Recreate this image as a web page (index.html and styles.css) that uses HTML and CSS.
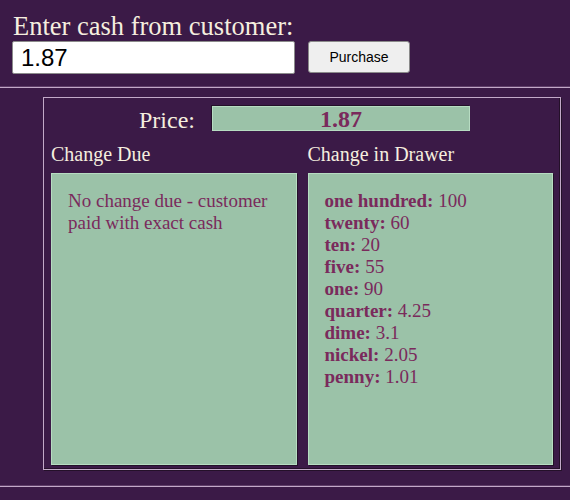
FILE: index.html
```html
<!DOCTYPE html>
<html>
<head>
<meta charset="utf-8">
<link rel="stylesheet" href="styles.css">
</head>
<body>
<div class="top">
  <label class="prompt" for="cash">Enter cash from customer:</label>
  <div class="entry">
    <input id="cash" class="cash" type="text" value="1.87">
    <button class="buy">Purchase</button>
  </div>
</div>
<hr class="rule">
<div class="register">
  <div class="price-row">
    <span class="price-label">Price:</span>
    <div class="price-value">1.87</div>
  </div>
  <div class="cols">
    <div class="col">
      <h2 class="col-title">Change Due</h2>
      <div class="panel">
        <p class="msg">No change due - customer paid with exact cash</p>
      </div>
    </div>
    <div class="col">
      <h2 class="col-title">Change in Drawer</h2>
      <div class="panel">
        <ul class="drawer">
          <li><b>one hundred:</b> 100</li>
          <li><b>twenty:</b> 60</li>
          <li><b>ten:</b> 20</li>
          <li><b>five:</b> 55</li>
          <li><b>one:</b> 90</li>
          <li><b>quarter:</b> 4.25</li>
          <li><b>dime:</b> 3.1</li>
          <li><b>nickel:</b> 2.05</li>
          <li><b>penny:</b> 1.01</li>
        </ul>
      </div>
    </div>
  </div>
</div>
<hr class="rule bottom">
</body>
</html>
```
FILE: styles.css
```css
html, body {
  margin: 0;
  padding: 0;
  background: #3b1a47;
  font-family: "Liberation Serif", "DejaVu Serif", serif;
  color: #f5eedf;
}
.top {
  padding: 12px 0 0 12px;
}
.prompt {
  display: block;
  font-size: 26.5px;
  line-height: 29px;
  margin-left: 1px;
}
.entry {
  display: flex;
  align-items: flex-start;
  gap: 13px;
  margin-top: 0;
}
.cash {
  box-sizing: border-box;
  width: 283px;
  height: 33px;
  margin: 0;
  padding: 0 8px;
  border: 1px solid #8b8b8b;
  border-radius: 2px;
  background: #fff;
  font-family: "Liberation Sans", Arial, sans-serif;
  font-size: 24px;
  color: #000;
}
.buy {
  box-sizing: border-box;
  width: 102px;
  height: 32px;
  margin: 0;
  border: 1px solid #8a8a8a;
  border-radius: 3px;
  background: #efefef;
  font-family: "Liberation Sans", Arial, sans-serif;
  font-size: 14px;
  color: #000;
}
.rule {
  margin: 12px 0 0;
  border: 0;
  border-top: 1px solid #5e3d68;
  border-bottom: 1px solid #c2a9c8;
  height: 0;
}
.rule.bottom {
  margin-top: 15px;
}
.register {
  box-sizing: border-box;
  width: 518px;
  margin: 9px 0 0 43px;
  border: 1px solid #c2a9c8;
  box-shadow: inset -1px -1px 0 #241029, 1px 1px 0 #241029;
  padding: 8px 7px 4px 7px;
}
.price-row {
  display: flex;
  align-items: center;
  height: 24px;
}
.price-label {
  width: 144px;
  text-align: right;
  font-size: 24px;
  line-height: 24px;
  position: relative;
  top: 2px;
}
.price-value {
  box-sizing: border-box;
  margin-left: 17px;
  width: 258px;
  height: 25px;
  background: #9bc2a8;
  border: 1px solid #b7dcc2;
  box-shadow: -1px -1px 0 #241029;
  color: #7a2a5c;
  font-size: 24px;
  font-weight: bold;
  line-height: 24px;
  text-align: center;
}
.cols {
  display: flex;
  gap: 11px;
  margin-top: 13px;
}
.col {
  flex: 1;
  display: flex;
  flex-direction: column;
}
.col-title {
  margin: 0 0 8px;
  font-size: 20px;
  font-weight: normal;
  line-height: 22px;
}
.panel {
  box-sizing: border-box;
  height: 292px;
  background: #9bc2a8;
  border: 1px solid #b7dcc2;
  box-shadow: 1px 1px 0 #241029;
  padding: 16px 16px;
  color: #7a2a5c;
  font-size: 19px;
  line-height: 22px;
}
.msg {
  margin: 0;
}
.drawer {
  list-style: none;
  margin: 0;
  padding: 0;
}
```
